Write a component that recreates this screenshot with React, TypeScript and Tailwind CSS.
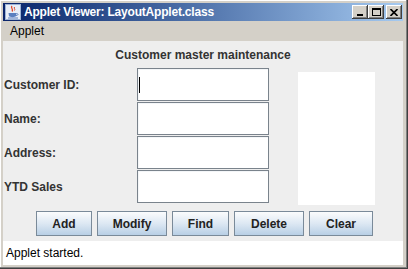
import React from "react";

const font = { fontFamily: '"Liberation Sans", Arial, sans-serif' };

function JavaIcon() {
  return (
    <svg width="16" height="16" viewBox="0 0 16 16">
      <rect x="0.5" y="0.5" width="15" height="15" fill="#e8eef8" stroke="#9db3d6" />
      <path d="M7 2 C5 4 9 5 7 7.5" stroke="#e0482a" strokeWidth="1.3" fill="none" />
      <path d="M9.5 3 C8.5 4.5 10.5 5 9.5 6.5" stroke="#e0482a" strokeWidth="1" fill="none" />
      <path d="M3.5 9 L11.5 9 L11 12 C10.5 13.5 4.5 13.5 4 12 Z" fill="#5a7fc0" />
      <path d="M11.5 9.5 C13.5 9.5 13.5 11.5 11 11.5" stroke="#5a7fc0" strokeWidth="1" fill="none" />
      <rect x="3" y="13.5" width="10" height="1" fill="#5a7fc0" />
    </svg>
  );
}

function WinBtn({ children }: { children: React.ReactNode }) {
  return (
    <div className="w-[16px] h-[14px] bg-[#d4d0c8] flex items-center justify-center shadow-[inset_-1px_-1px_0_#404040,inset_1px_1px_0_#ffffff,inset_-2px_-2px_0_#808080]">
      {children}
    </div>
  );
}

function Field({ caret }: { caret?: boolean }) {
  return (
    <div className="h-[33px] w-[132px] bg-white border border-[#7a838c] shadow-[inset_1px_1px_0_#f4f6f8] flex items-center pl-[1px]">
      {caret && <div className="w-[1px] h-[16px] bg-black" />}
    </div>
  );
}

function Btn({ label, w }: { label: string; w: string }) {
  return (
    <div
      className={`${w} h-[25px] border border-[#7a8a99] bg-gradient-to-b from-[#fbfcfd] via-[#dde8f3] to-[#b8cfe5] flex items-center justify-center text-[12px] font-bold text-[#222]`}
    >
      {label}
    </div>
  );
}

export default function App() {
  return (
    <div
      className="w-[408px] h-[269px] bg-[#d4d0c8] pt-[3px] pl-[3px] pr-[5px] pb-[4px] flex flex-col shadow-[inset_-1px_-1px_0_#404040,inset_-2px_-2px_0_#808080,inset_1px_1px_0_#ffffff]"
      style={font}
    >
      {/* title bar */}
      <div className="h-[18px] bg-gradient-to-r from-[#0a246a] to-[#a6caf0] flex items-center pl-[2px] pr-[1px]">
        <JavaIcon />
        <span className="ml-[3px] text-white font-bold text-[12px] tracking-[-0.2px] leading-none">
          Applet Viewer: LayoutApplet.class
        </span>
        <div className="ml-auto flex items-center">
          <WinBtn>
            <div className="w-[6px] h-[2px] bg-black mt-[6px] mr-[1px]" />
          </WinBtn>
          <WinBtn>
            <div className="w-[9px] h-[8px] border border-black border-t-2" />
          </WinBtn>
          <div className="w-[2px]" />
          <WinBtn>
            <svg width="8" height="7" viewBox="0 0 8 7">
              <path d="M0.5 0 L7.5 7 M7.5 0 L0.5 7" stroke="black" strokeWidth="1.6" />
            </svg>
          </WinBtn>
        </div>
      </div>
      {/* menu bar */}
      <div className="h-[20px] flex items-center pl-[7px] text-[12px] text-black">Applet</div>
      {/* content */}
      <div className="flex-1 bg-[#eeeeee] flex flex-col">
        <div className="h-[27px] flex items-center justify-center text-[12px] font-bold text-[#333]">
          Customer master maintenance
        </div>
        <div className="h-[137px] flex">
          <div className="w-[134px] flex flex-col gap-[1px] pl-[1px] text-[12px] font-bold text-[#333]">
            <div className="h-[33px] flex items-center">Customer ID:</div>
            <div className="h-[33px] flex items-center">Name:</div>
            <div className="h-[33px] flex items-center">Address:</div>
            <div className="h-[33px] flex items-center">YTD Sales</div>
          </div>
          <div className="flex flex-col gap-[1px]">
            <Field caret />
            <Field />
            <Field />
            <Field />
          </div>
          <div className="ml-[29px] mt-[4px] w-[77px] h-[133px] bg-white" />
        </div>
        <div className="mt-[6px] flex gap-[5px] pl-[33px]">
          <Btn label="Add" w="w-[56px]" />
          <Btn label="Modify" w="w-[70px]" />
          <Btn label="Find" w="w-[57px]" />
          <Btn label="Delete" w="w-[70px]" />
          <Btn label="Clear" w="w-[64px]" />
        </div>
        <div className="mt-[5px] flex-1 bg-white flex items-center pl-[3px] text-[12px] text-black">
          Applet started.
        </div>
      </div>
    </div>
  );
}
